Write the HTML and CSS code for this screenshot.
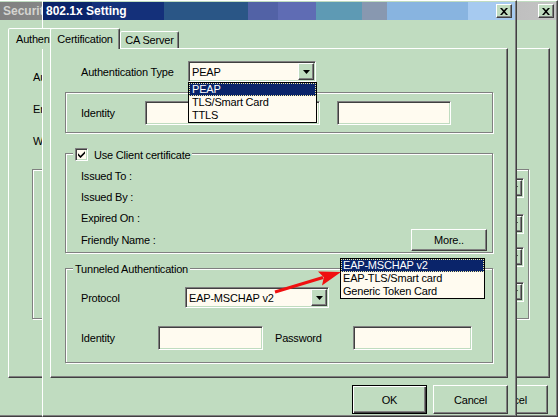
FILE: index.html
```html
<!DOCTYPE html>
<html>
<head>
<meta charset="utf-8">
<title>802.1x Setting</title>
<link rel="stylesheet" href="styles.css">
</head>
<body>
<div class="desk">

  <div class="win back">
    <div class="title inactive">
      <span class="title-text">Security Settings</span>
      <span class="close"><svg width="8" height="7" viewBox="0 0 8 7"><polygon points="0,0 2,0 4,2.3 6,0 8,0 5,3.5 8,7 6,7 4,4.7 2,7 0,7 3,3.5"/></svg></span>
    </div>
    <div class="body">
      <div class="tabs"><div class="tab sel tab-auth">Authentication</div></div>
      <div class="panel">
        <div class="brow">Authentication :</div>
        <div class="brow">Encryption :</div>
        <div class="brow">Wireless Network Key :</div>
        <div class="group bgroup">
          <div class="combo mini m1"><span></span><span class="ddbtn"><svg width="7" height="4" viewBox="0 0 7 4"><polygon points="0,0 7,0 3.5,4"/></svg></span></div>
          <div class="combo mini m2"><span></span><span class="ddbtn"><svg width="7" height="4" viewBox="0 0 7 4"><polygon points="0,0 7,0 3.5,4"/></svg></span></div>
          <div class="combo mini m3"><span></span><span class="ddbtn"><svg width="7" height="4" viewBox="0 0 7 4"><polygon points="0,0 7,0 3.5,4"/></svg></span></div>
          <div class="combo mini m4"><span></span><span class="ddbtn"><svg width="7" height="4" viewBox="0 0 7 4"><polygon points="0,0 7,0 3.5,4"/></svg></span></div>
        </div>
      </div>
      <div class="buttons back-buttons"><button class="btn">Cancel</button></div>
    </div>
  </div>

  <div class="win front">
    <div class="title active">
      <span class="title-text">802.1x Setting</span>
      <span class="close"><svg width="8" height="7" viewBox="0 0 8 7"><polygon points="0,0 2,0 4,2.3 6,0 8,0 5,3.5 8,7 6,7 4,4.7 2,7 0,7 3,3.5"/></svg></span>
    </div>
    <div class="body">
      <div class="tabs">
        <div class="tab sel tab-cert">Certification</div>
        <div class="tab tab-ca">CA Server</div>
      </div>
      <div class="panel">
        <div class="row row-auth">
          <span class="lbl lbl-auth">Authentication Type</span>
          <div class="combo combo-auth"><span class="val">PEAP</span><span class="ddbtn"><svg width="7" height="4" viewBox="0 0 7 4"><polygon points="0,0 7,0 3.5,4"/></svg></span></div>
        </div>

        <div class="group g-ident">
          <span class="lbl lbl-id1">Identity</span>
          <div class="input in-id1"></div>
          <div class="input in-id2"></div>
        </div>

        <div class="group g-cert">
          <div class="legend legend-cert">
            <span class="check"><svg width="7" height="7" viewBox="0 0 7 7"><polygon points="0,2.2 2.5,4.7 7,0.2 7,2.6 2.5,7.1 0,4.6"/></svg></span>
            <span>Use Client certificate</span>
          </div>
          <div class="crow crow-first">Issued To :</div>
          <div class="crow">Issued By :</div>
          <div class="crow">Expired On :</div>
          <div class="crow crow-last"><span>Friendly Name :</span><button class="btn btn-more">More..</button></div>
        </div>

        <div class="group g-tun">
          <div class="legend legend-tun">Tunneled Authentication</div>
          <div class="row row-proto">
            <span class="lbl lbl-proto">Protocol</span>
            <div class="combo combo-proto"><span class="val">EAP-MSCHAP v2</span><span class="ddbtn"><svg width="7" height="4" viewBox="0 0 7 4"><polygon points="0,0 7,0 3.5,4"/></svg></span></div>
          </div>
          <div class="row row-cred">
            <span class="lbl lbl-id2">Identity</span>
            <div class="input in-user"></div>
            <span class="lbl lbl-pw">Password</span>
            <div class="input in-pw"></div>
          </div>
        </div>
      </div>
      <div class="buttons">
        <button class="btn default">OK</button>
        <button class="btn">Cancel</button>
      </div>
    </div>
  </div>

  <ul class="list list-auth">
    <li class="sel">PEAP</li>
    <li>TLS/Smart Card</li>
    <li>TTLS</li>
  </ul>

  <ul class="list list-proto">
    <li class="sel">EAP-MSCHAP v2</li>
    <li>EAP-TLS/Smart card</li>
    <li>Generic Token Card</li>
  </ul>

  <svg class="arrow" width="558" height="417" viewBox="0 0 558 417">
    <line x1="275" y1="292" x2="323" y2="277.5" stroke="#f01010" stroke-width="3"/>
    <polygon points="341,272 318,271.5 323.8,277.2 322,285.5" fill="#f01010"/>
  </svg>

</div>
</body>
</html>
```

FILE: styles.css
```css
* { box-sizing: border-box; }

html, body {
  margin: 0;
  padding: 0;
}

body {
  width: 558px;
  height: 417px;
  overflow: hidden;
  background: #c0dcc0;
  font-family: "Liberation Sans", Arial, sans-serif;
  font-size: 11px;
  letter-spacing: -0.2px;
  color: #000;
}

.desk {
  position: relative;
  width: 558px;
  height: 417px;
  overflow: hidden;
}

/* ---------- windows ---------- */
.win {
  position: absolute;
  top: 0;
  height: 417px;
  background: #c0dcc0;
  border-left: 1px solid #fff;
  border-top: 1px solid #fff;
  border-right: 1px solid #404040;
  border-bottom: 1px solid #404040;
  box-shadow: inset -1px -1px #808080;
  padding: 1px 1px 1px 0;
  display: flex;
  flex-direction: column;
}

.back {
  left: -4px;
  width: 562px;
  padding-left: 1px;
}

.front {
  left: 42px;
  width: 475px;
}

.title {
  flex: none;
  height: 18px;
  display: flex;
  align-items: center;
  justify-content: space-between;
  font-weight: bold;
  font-size: 12px;
  letter-spacing: 0;
  white-space: nowrap;
  overflow: hidden;
}

.title.active {
  padding-left: 3px;
  color: #fff;
  background: linear-gradient(to right,
    #0a246a 0 49px,
    #14307a 49px 121px,
    #2a5686 121px 205px,
    #5262a6 205px 235px,
    #5f6cb4 235px 273px,
    #5e9ab4 273px 319px,
    #8898b0 319px 344px,
    #88b4e0 344px 425px,
    #a6caf0 425px);
}

.title.inactive {
  padding-left: 5px;
  color: #d4d4d0;
  background: linear-gradient(to right, #808080, #c4c4c4);
}

.close {
  flex: none;
  width: 16px;
  height: 14px;
  margin-right: 3px;
  background: #c0dcc0;
  border: 1px solid;
  border-color: #fff #404040 #404040 #fff;
  box-shadow: inset -1px -1px #808080;
  display: flex;
  align-items: center;
  justify-content: center;
}

.back .close { margin-right: 2px; }

.close svg { display: block; fill: #000; }

/* ---------- body / tabs ---------- */
.front .body { padding: 0 7px; }
.back .body { padding: 0 6px 0 10px; }

.tabs {
  display: flex;
  align-items: flex-end;
  height: 20px;
  margin-top: 8px;
}

.tab {
  height: 17px;
  border: 1px solid;
  border-bottom: none;
  border-color: #fff #404040 transparent #fff;
  border-radius: 2px 2px 0 0;
  box-shadow: inset -1px 0 #808080;
  background: #c0dcc0;
  display: flex;
  align-items: center;
  justify-content: center;
  white-space: nowrap;
}

.tab.sel {
  height: 21px;
  margin-bottom: -1px;
  position: relative;
  z-index: 1;
}

.tab-cert { width: 70px; }
.tab-ca { width: 59px; }
.tab-auth { width: 90px; justify-content: flex-start; padding-left: 7px; }

.panel {
  flex: none;
  height: 330px;
  border: 1px solid;
  border-color: #fff #404040 #404040 #fff;
  box-shadow: inset -1px -1px #808080;
  display: flex;
  flex-direction: column;
}

/* ---------- common controls ---------- */
.btn {
  width: 75px;
  height: 29px;
  padding: 0;
  margin: 0;
  background: #c0dcc0;
  border: 1px solid;
  border-color: #fff #404040 #404040 #fff;
  box-shadow: inset -1px -1px #808080;
  font: inherit;
  letter-spacing: inherit;
  color: #000;
}

.btn.default {
  border: 1px solid #000;
  box-shadow: inset 1px 1px #fff, inset -1px -1px #404040, inset -2px -2px #808080;
}

.buttons {
  display: flex;
  justify-content: flex-end;
  gap: 6px;
  margin-top: 7px;
}

.back-buttons { margin-right: 2px; }

.input {
  flex: none;
  height: 24px;
  background: #fffbf0;
  border: 1px solid;
  border-color: #808080 #fff #fff #808080;
  box-shadow: inset 1px 1px #404040, inset -1px -1px #c0dcc0;
}

.combo {
  flex: none;
  height: 21px;
  background: #fffbf0;
  border: 1px solid;
  border-color: #808080 #fff #fff #808080;
  box-shadow: inset 1px 1px #404040, inset -1px -1px #c0dcc0;
  padding: 1px 1px 1px 3px;
  display: flex;
  align-items: center;
  justify-content: space-between;
  white-space: nowrap;
}

.ddbtn {
  flex: none;
  width: 16px;
  height: 100%;
  background: #c0dcc0;
  border: 1px solid;
  border-color: #fff #404040 #404040 #fff;
  box-shadow: inset -1px -1px #808080;
  display: flex;
  align-items: center;
  justify-content: center;
}

.ddbtn svg { display: block; fill: #000; }

.group {
  flex: none;
  width: 428px;
  margin-left: 14px;
  border: 1px solid #808080;
  box-shadow: inset 1px 1px #fff, 1px 1px #fff;
}

.legend {
  align-self: flex-start;
  display: flex;
  align-items: center;
  height: 13px;
  margin-left: 7px;
  padding: 0 2px;
  background: #c0dcc0;
  white-space: nowrap;
}

.lbl {
  flex: none;
  white-space: nowrap;
}

/* ---------- front panel content ---------- */
.row {
  display: flex;
  align-items: center;
}

.row-auth {
  height: 21px;
  margin: 12px 0 0 30px;
}

.lbl-auth { width: 107px; }
.combo-auth { width: 128px; }

.g-ident {
  height: 41px;
  margin-top: 10px;
  display: flex;
  align-items: center;
  padding-left: 15px;
}

.lbl-id1 { width: 64px; }
.in-id1 { width: 175px; margin-right: 17px; }
.in-id2 { width: 114px; }

.g-cert {
  height: 100px;
  margin-top: 20px;
  display: flex;
  flex-direction: column;
}

.legend-cert { margin-top: -6px; }

.check {
  flex: none;
  width: 13px;
  height: 13px;
  margin-right: 6px;
  background: #fffbf0;
  border: 1px solid;
  border-color: #808080 #fff #fff #808080;
  box-shadow: inset 1px 1px #404040, inset -1px -1px #c0dcc0;
  display: flex;
  align-items: center;
  justify-content: center;
}

.check svg { display: block; fill: #000; }

.crow {
  height: 21px;
  display: flex;
  align-items: center;
  padding-left: 15px;
  white-space: nowrap;
}

.crow-first { margin-top: 4px; }

.crow-last {
  margin-top: 1px;
  justify-content: space-between;
  padding-right: 5px;
}

.btn-more {
  width: 76px;
  height: 22px;
}

.g-tun {
  height: 95px;
  margin-top: 15px;
  display: flex;
  flex-direction: column;
}

.legend-tun { margin-top: -7px; }

.row-proto {
  height: 21px;
  margin-top: 12px;
  padding-left: 15px;
}

.lbl-proto { width: 104px; }
.combo-proto { width: 144px; }

.row-cred {
  height: 24px;
  margin-top: 18px;
  padding-left: 15px;
}

.lbl-id2 { width: 77px; }
.in-user { width: 105px; }
.lbl-pw { width: 78px; margin-left: 12px; }
.in-pw { width: 119px; }

/* ---------- back window content ---------- */
.brow {
  height: 32px;
  display: flex;
  align-items: center;
  margin-left: 24px;
  white-space: nowrap;
}

.brow:first-child { margin-top: 12px; }

.bgroup {
  width: 497px;
  height: 150px;
  margin: 12px 0 0 23px;
  display: flex;
  flex-direction: column;
  align-items: flex-end;
  padding-right: 4px;
}

.mini { width: 120px; height: 20px; }
.m1 { margin-top: 8px; }
.m2 { margin-top: 16px; }
.m3 { margin-top: 13px; }
.m4 { margin-top: 15px; }

/* ---------- popup lists ---------- */
.list {
  position: absolute;
  margin: 0;
  padding: 0;
  list-style: none;
  background: #fffbf0;
  border: 1px solid #000;
  z-index: 5;
}

.list li {
  height: 13px;
  line-height: 13px;
  white-space: nowrap;
}

.list li.sel {
  background: #0a246a;
  color: #fff;
  outline: 1px dotted #f2eaa0;
  outline-offset: -1px;
}

.list-auth {
  left: 188px;
  top: 82px;
  width: 129px;
}

.list-auth li { padding-left: 3px; }

.list-proto {
  left: 340px;
  top: 258px;
  width: 145px;
}

.list-proto li { padding-left: 2px; }

.arrow {
  position: absolute;
  left: 0;
  top: 0;
  z-index: 10;
  pointer-events: none;
}
```
